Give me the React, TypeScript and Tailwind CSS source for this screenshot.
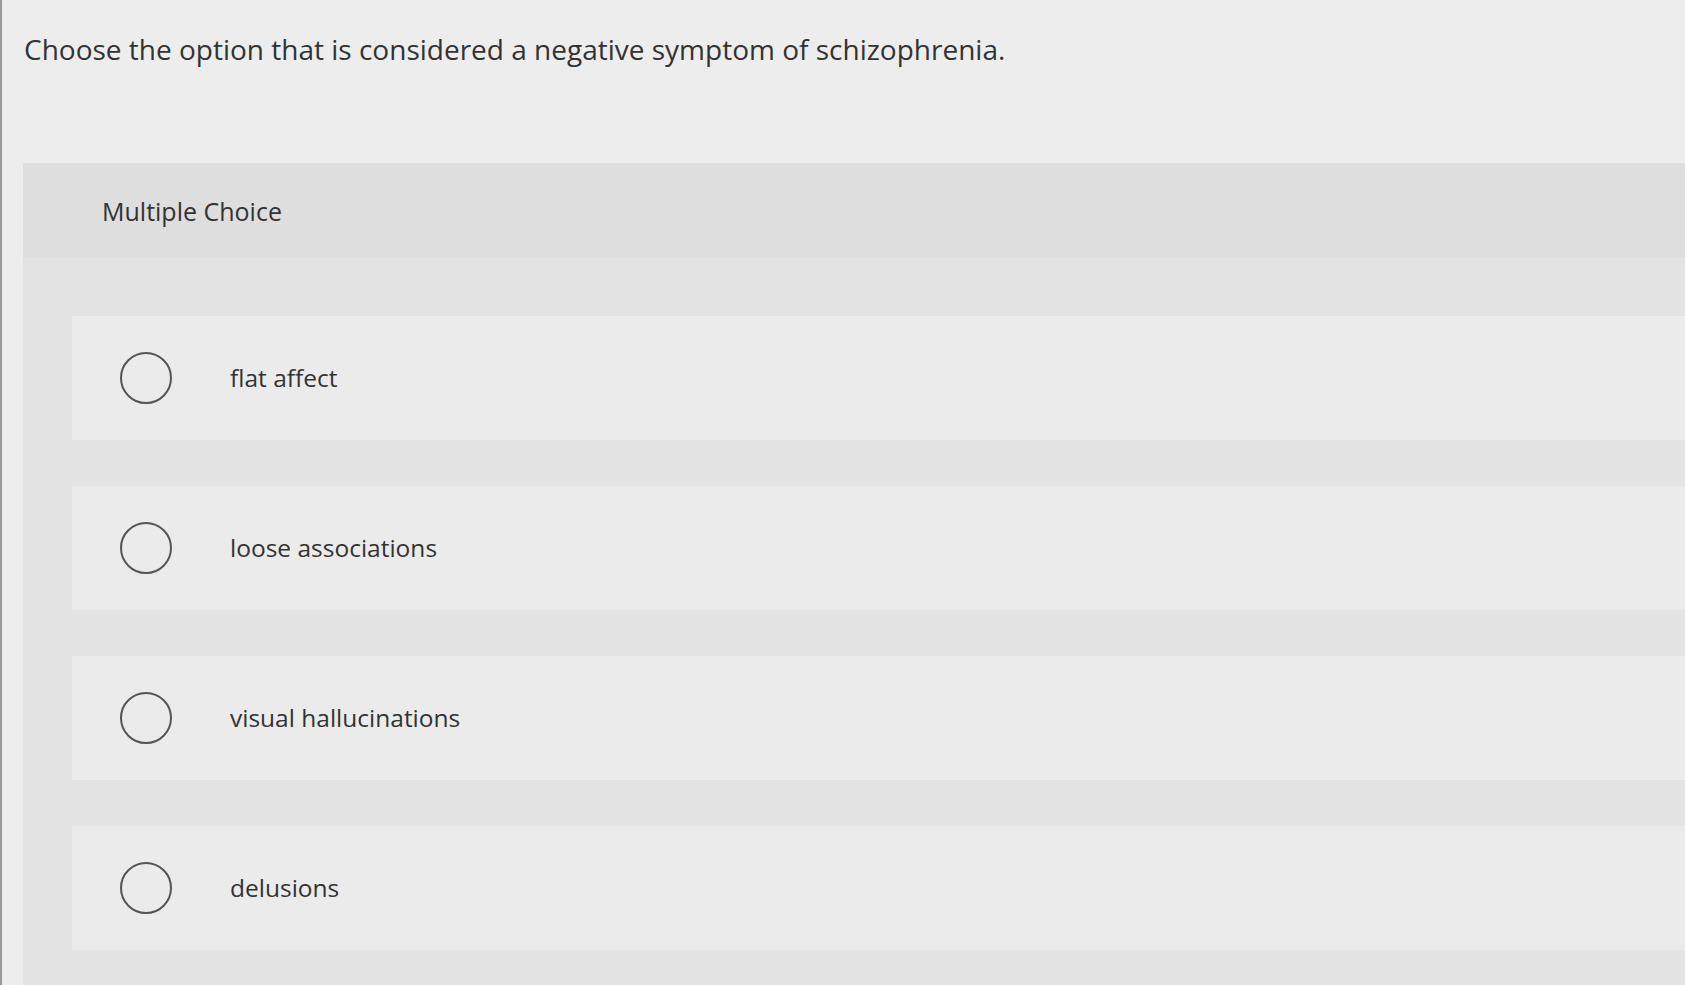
import React from "react";

const options = ["flat affect", "loose associations", "visual hallucinations", "delusions"];

export default function App() {
  return (
    <div
      className="w-[1685px] h-[985px] overflow-hidden bg-[#ededed] border-l-2 border-[#9a9a9a] text-[#333333]"
      style={{ fontFamily: "'Open Sans', Lato, sans-serif" }}
    >
      <div className="h-[163px] pl-[22px] pt-[31px]">
        <h1 className="text-[28px] leading-[36px] font-normal">
          Choose the option that is considered a negative symptom of schizophrenia.
        </h1>
      </div>
      <div className="ml-[21px] bg-[#e3e3e3] h-[822px]">
        <div className="h-[95px] bg-[#dedede] flex items-center pl-[79px]">
          <span className="text-[25px] leading-[30px]">Multiple Choice</span>
        </div>
        <div className="flex flex-col gap-[46px] pt-[58px] pl-[49px]">
          {options.map((o) => (
            <div key={o} className="h-[124px] bg-[#ebebeb] flex items-center">
              <div className="ml-[48px] w-[52px] h-[52px] rounded-full border-2 border-[#555555] shrink-0" />
              <span className="ml-[58px] text-[24.5px] leading-[30px]">{o}</span>
            </div>
          ))}
        </div>
      </div>
    </div>
  );
}
